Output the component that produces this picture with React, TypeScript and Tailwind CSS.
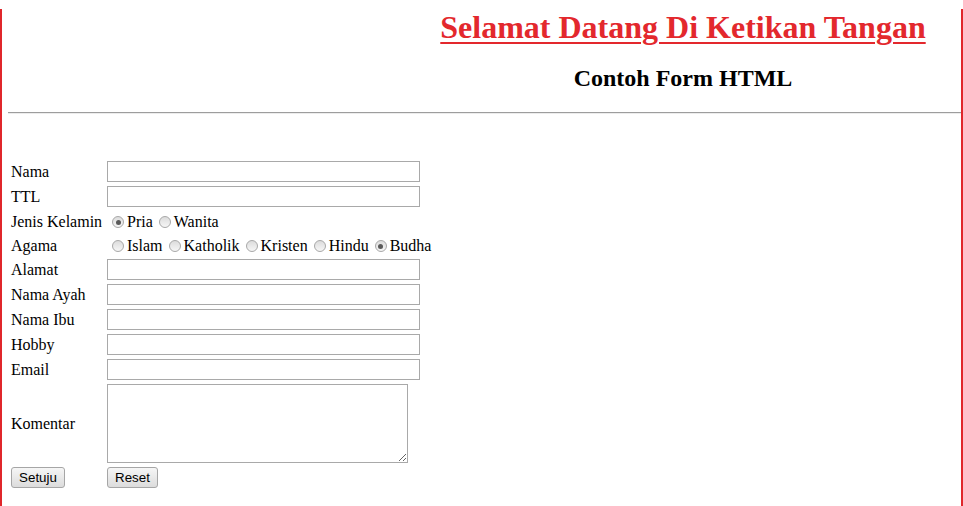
import React from "react";

const serif = { fontFamily: '"Liberation Serif", "Times New Roman", serif' };
const sans = { fontFamily: '"Liberation Sans", Arial, sans-serif' };

function Radio({ checked }: { checked?: boolean }) {
  return (
    <span className="ml-[5px] mr-[3px] inline-flex h-[12px] w-[12px] shrink-0 items-center justify-center rounded-full border border-[#a8a8a8] bg-gradient-to-b from-[#dcdcdc] to-[#f6f6f6]">
      {checked && <span className="h-[5px] w-[5px] rounded-full bg-[#5a5a5a]" />}
    </span>
  );
}

function Opt({ label, checked }: { label: string; checked?: boolean }) {
  return (
    <span className="inline-flex items-center">
      <Radio checked={checked} />
      <span>{label}</span>
      <span className="w-[1px]" />
    </span>
  );
}

function TextRow({ label }: { label: string }) {
  return (
    <div className="flex h-[21px] items-center">
      <div className="w-[96px] shrink-0">{label}</div>
      <input type="text" className="h-[21px] w-[313px] border border-[#a9a9a9] bg-white outline-none" />
    </div>
  );
}

export default function App() {
  return (
    <div className="min-h-screen w-full border-x-2 border-[#e0262b] bg-white text-black" style={serif}>
      <div className="ml-[402px] w-[558px] text-center">
        <h1 className="mt-[9px] text-[32px] font-bold leading-[36px] text-[#e3282d] underline decoration-[2px] underline-offset-[4px]">
          Selamat Datang Di Ketikan Tangan
        </h1>
        <h2 className="mt-[19px] text-[24px] font-bold leading-[28px]">Contoh Form HTML</h2>
      </div>
      <div className="ml-[6px] mt-[20px] h-[2px] border-t border-b border-t-[#9d9d9d] border-b-[#ececec]" />
      <form className="mt-[47px] flex flex-col gap-[4px] pl-[9px] text-[16px] leading-[18px]">
        <TextRow label="Nama" />
        <TextRow label="TTL" />
        <div className="flex h-[20px] items-center pt-[2px]">
          <div className="w-[96px] shrink-0">Jenis Kelamin</div>
          <div className="flex items-center">
            <Opt label="Pria" checked />
            <Opt label="Wanita" />
          </div>
        </div>
        <div className="flex h-[20px] items-center pt-[2px]">
          <div className="w-[96px] shrink-0">Agama</div>
          <div className="flex items-center">
            <Opt label="Islam" />
            <Opt label="Katholik" />
            <Opt label="Kristen" />
            <Opt label="Hindu" />
            <Opt label="Budha" checked />
          </div>
        </div>
        <TextRow label="Alamat" />
        <TextRow label="Nama Ayah" />
        <TextRow label="Nama Ibu" />
        <TextRow label="Hobby" />
        <TextRow label="Email" />
        <div className="flex h-[79px] items-center">
          <div className="w-[96px] shrink-0">Komentar</div>
          <textarea className="h-[79px] w-[301px] border border-[#a9a9a9] bg-white outline-none" />
        </div>
        <div className="flex h-[21px] items-center" style={sans}>
          <div className="w-[96px] shrink-0">
            <button type="button" className="h-[21px] w-[54px] rounded-[3px] border border-[#a6a6a6] bg-gradient-to-b from-[#f6f6f6] to-[#dcdcdc] text-[13.33px] leading-[19px] text-black">
              Setuju
            </button>
          </div>
          <button type="reset" className="h-[21px] w-[51px] rounded-[3px] border border-[#a6a6a6] bg-gradient-to-b from-[#f6f6f6] to-[#dcdcdc] text-[13.33px] leading-[19px] text-black">
            Reset
          </button>
        </div>
      </form>
    </div>
  );
}
